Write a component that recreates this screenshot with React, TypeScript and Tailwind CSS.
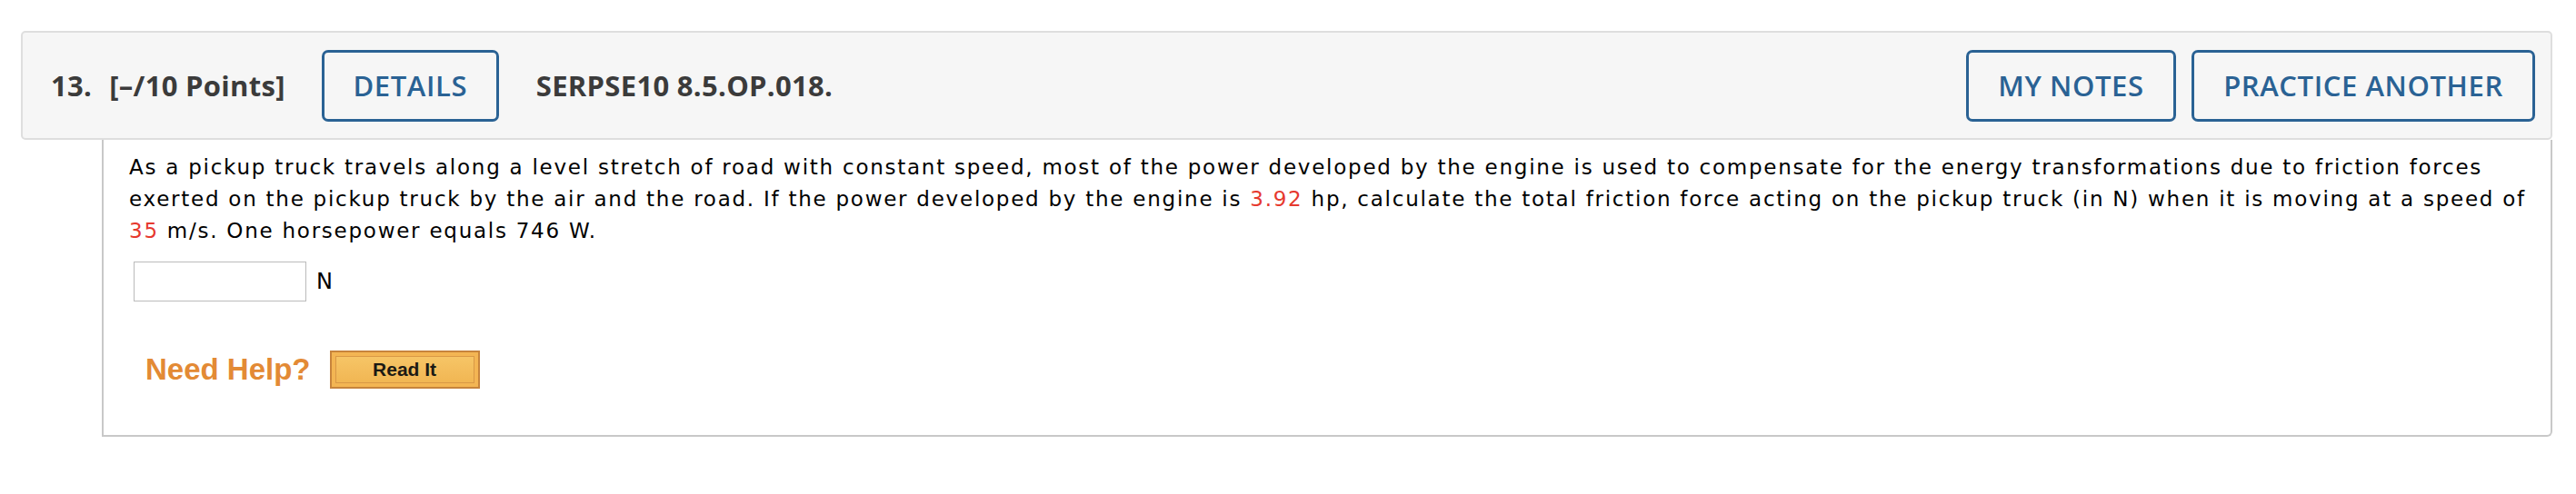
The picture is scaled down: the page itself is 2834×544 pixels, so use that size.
const headerFont = { fontFamily: '"Open Sans", "Liberation Sans", sans-serif' };
const bodyFont = { fontFamily: '"DejaVu Sans", Verdana, sans-serif' };

const OutlineButton = ({ label, className }: { label: string; className: string }) => (
  <button
    className={`h-[79px] rounded-[7px] border-[3px] border-[#2a6294] bg-transparent text-[31px] font-semibold tracking-[0.6px] text-[#2a6294] ${className}`}
    style={headerFont}
  >
    {label}
  </button>
);

const Red = ({ children }: { children: string }) => <span className="text-[#e6392e]">{children}</span>;

export default function App() {
  return (
    <div className="min-h-[544px] w-[2834px] bg-white pl-[23px] pr-[26px] pt-[34px]">
      <div className="flex h-[120px] items-center rounded-[5px] border-2 border-[#dedede] bg-[#f6f6f6] pl-[31px] pr-[17px]">
        <div className="flex items-center text-[31px] font-bold tracking-[0.3px] text-[#3b3b3b]" style={headerFont}>
          <span>13.</span>
          <span className="ml-[19px]">[–/10 Points]</span>
        </div>
        <OutlineButton label="DETAILS" className="ml-[40px] w-[195px]" />
        <span className="ml-[41px] text-[31px] font-bold tracking-[0.3px] text-[#3b3b3b]" style={headerFont}>
          SERPSE10 8.5.OP.018.
        </span>
        <div className="ml-auto flex gap-[17px]">
          <OutlineButton label="MY NOTES" className="w-[231px]" />
          <OutlineButton label="PRACTICE ANOTHER" className="w-[378px]" />
        </div>
      </div>

      <div className="ml-[89px] h-[327px] rounded-br-[6px] border-2 border-t-0 border-[#c8c8c8] pl-[28px] pr-[20px] pt-[13px]">
        <p className="text-[23px] leading-[35px] tracking-[1.75px] text-black" style={bodyFont}>
          As a pickup truck travels along a level stretch of road with constant speed, most of the power developed by
          the engine is used to compensate for the energy transformations due to friction forces exerted on the pickup
          truck by the air and the road. If the power developed by the engine is <Red>3.92</Red> hp, calculate the
          total friction force acting on the pickup truck (in N) when it is moving at a speed of <Red>35</Red> m/s. One
          horsepower equals 746 W.
        </p>

        <div className="mt-[16px] flex items-center pl-[5px]">
          <input type="text" className="h-[44px] w-[190px] border border-[#bbbbbb] bg-white outline-none" />
          <span className="ml-[11px] text-[24px] text-black" style={bodyFont}>
            N
          </span>
        </div>

        <div className="mt-[50px] flex items-center pl-[18px]" style={{ fontFamily: '"Liberation Sans", Arial, sans-serif' }}>
          <span className="text-[33px] font-bold text-[#e38a35]">Need Help?</span>
          <div className="ml-[21px] flex h-[42px] w-[165px] border-2 border-[#c7843c] bg-[#f3b553] p-[4px]">
            <div className="flex flex-1 items-center justify-center border border-[#d99846] bg-gradient-to-b from-[#f6c566] to-[#f1b653] text-[21px] font-bold text-[#1c1a14]">
              Read It
            </div>
          </div>
        </div>
      </div>
    </div>
  );
}
